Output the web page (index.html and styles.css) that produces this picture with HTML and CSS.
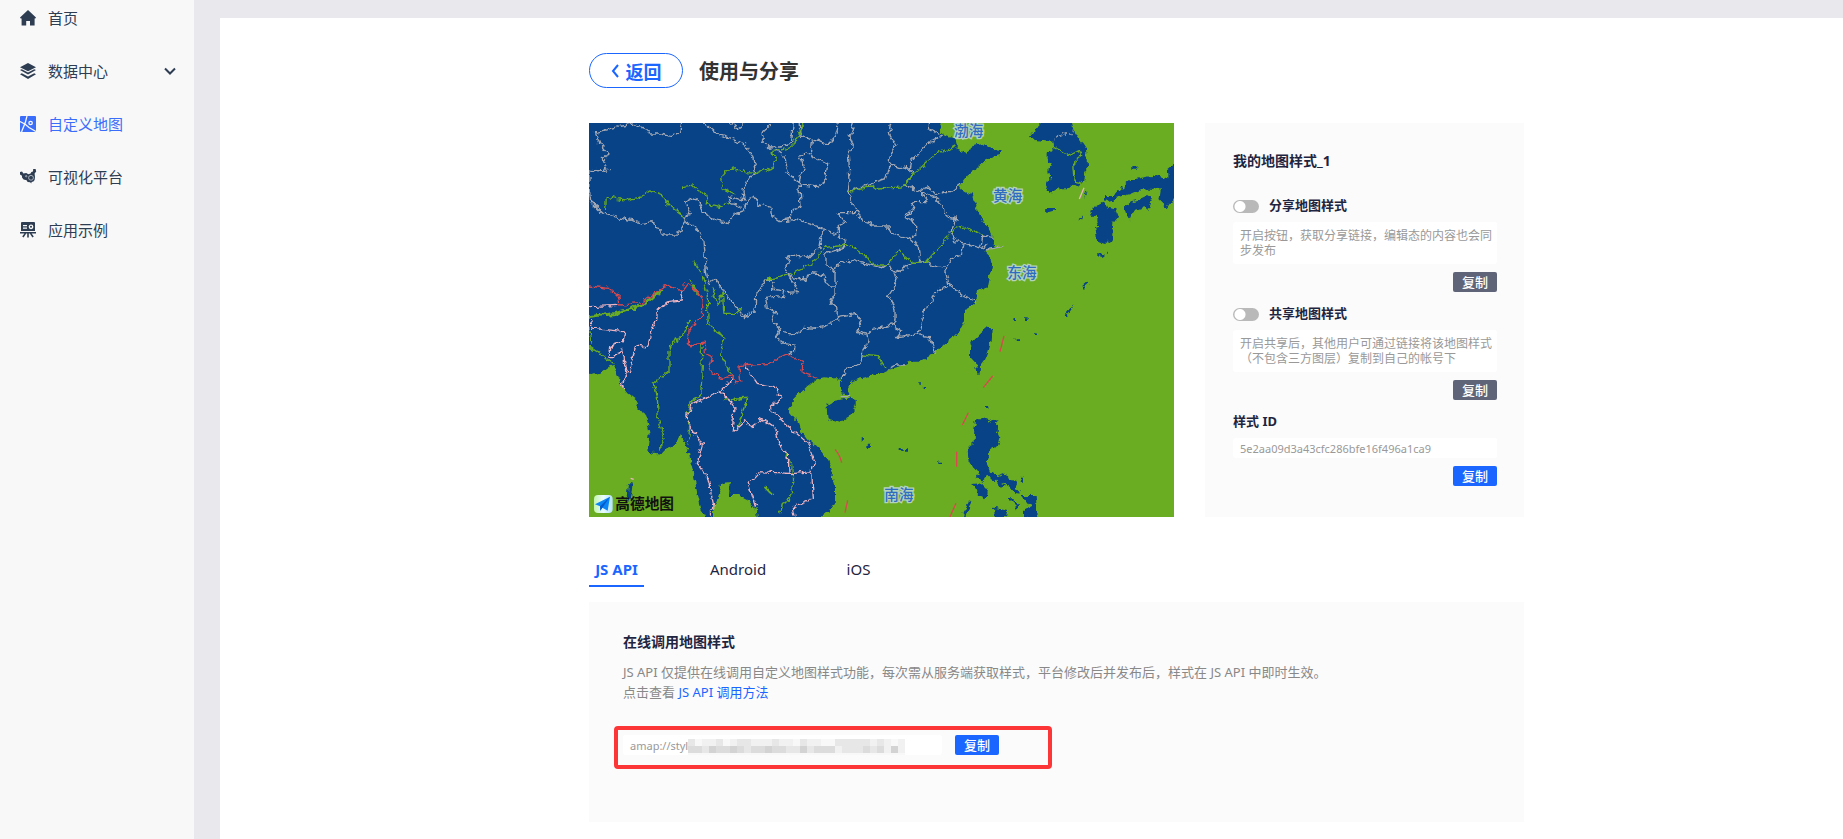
FILE: index.html
```html
<!DOCTYPE html>
<html lang="zh-CN">
<head>
<meta charset="utf-8">
<meta name="viewport" content="width=device-width, initial-scale=1">
<title>使用与分享</title>
<link rel="stylesheet" href="styles.css">
</head>
<body>
<div class="app">
  <nav class="sidebar">
    <a class="nav-item" href="#home">
      <svg class="nav-icon" viewBox="0 0 16 16"><path d="M8 0 16 7.4 15.3 8.4H14.6V15.6H10V11H6.2V15.6H1.6V8.4H.7L0 7.4Z"/></svg>
      <span>首页</span>
    </a>
    <a class="nav-item" href="#data">
      <svg class="nav-icon" viewBox="0 0 16 16"><path d="M8 0 16 4.2 8 8.2 0 4.2ZM0 7 1.8 6.2 8 9.4 14.2 6.2 16 7 8 11.5ZM0 11.2 1.8 10.3 8 13.5 14.2 10.3 16 11.2 8 16Z"/></svg>
      <span>数据中心</span>
      <svg class="nav-caret" viewBox="0 0 12 8"><path d="M1 1.5 6 6.5 11 1.5"/></svg>
    </a>
    <a class="nav-item nav-item-active" href="#custom">
      <svg class="nav-icon" viewBox="0 0 16 16"><rect width="16" height="16" rx="1"/><path class="nav-cut" d="M7 0 5.2 6.8 1.5 16M0 5.5 5.2 8.2 9 11.5 16 15.5"/><circle class="nav-cut" cx="10.6" cy="7" r="1.7"/></svg>
      <span>自定义地图</span>
    </a>
    <a class="nav-item" href="#visual">
      <svg class="nav-icon" viewBox="0 0 16 16"><path d="M0 3 2 2.6 3.4 4.4 6.2 4 8.4 5.2 10.6 4.4 11.4 3 13 2.6 13.2 0 15.6 0 16.2 2.6 14.6 4.4 15 8 14.6 11 13.4 12.6 11.6 13 11.2 14.4 10.2 13.2 7.6 13 6.6 11.2 3.6 10.4 2 8.6 2 6.8 0 5.6Z"/><circle class="nav-gear" cx="11" cy="8.8" r="2.4"/><circle class="nav-gear" cx="6.2" cy="7.2" r=".7"/></svg>
      <span>可视化平台</span>
    </a>
    <a class="nav-item" href="#demo">
      <svg class="nav-icon" viewBox="0 0 16 16"><path d="M2 0H14Q15 0 15 1V9H1V1Q1 0 2 0ZM0 10H16V11.4H11.6L13.8 14.6 12.4 15.4 9.8 11.6H8.8V15.4H7.2V11.6H6.2L3.6 15.4 2.2 14.6 4.4 11.4H0Z"/><path class="nav-cut" d="M3 3.6H7M3 6.2H7"/><circle class="nav-cut" cx="11" cy="4.8" r="1.7"/></svg>
      <span>应用示例</span>
    </a>
  </nav>

  <main class="main">
    <div class="content">
      <header class="page-head">
        <button class="back" type="button">
          <svg class="back-icon" viewBox="0 0 8 14"><path d="M7 1 2 7 7 13"/></svg>
          <span>返回</span>
        </button>
        <h1 class="page-title">使用与分享</h1>
      </header>

      <div class="overview">
        <svg class="map" viewBox="0 9 1755 1182" preserveAspectRatio="xMidYMid slice" role="img" aria-label="地图预览">
          <defs>
            <filter id="rough" filterUnits="userSpaceOnUse" x="-60" y="-60" width="1900" height="1320" color-interpolation-filters="sRGB">
              <feTurbulence type="fractalNoise" baseFrequency="0.05" numOctaves="3" seed="4" result="n"/>
              <feDisplacementMap in="SourceGraphic" in2="n" scale="22" xChannelSelector="R" yChannelSelector="G"/>
            </filter>
            <linearGradient id="logo" x1="0" y1="0" x2="1" y2="0"><stop offset="0" stop-color="#c4f5ae"/><stop offset=".5" stop-color="#e9fbff"/><stop offset="1" stop-color="#b5e2ff"/></linearGradient>
          </defs>
          <rect class="sea" y="9" width="1755" height="1182"/>
          <g filter="url(#rough)">
            <g class="land">
              <path d="M-50-40H1058V9L1052 35 1068 48 1100 58 1103 70 1103 88 1125 98 1142 92 1150 76 1173 70 1203 85 1238 90 1233 105 1198 115 1188 122 1168 140 1148 150 1133 175 1113 200 1128 215 1148 225 1158 250 1168 280 1178 295 1190 315 1203 330 1213 350 1211 372 1215 385 1185 392 1193 400 1213 420 1211 445 1203 470 1198 495 1178 513 1163 517 1163 540 1143 560 1128 570 1128 600 1113 630 1088 655 1068 670 1048 690 1018 710 988 725 958 725 928 740 898 750 878 760 838 770 798 780 783 790 778 800 783 815 778 825 763 825 753 810 753 776 708 772 683 778 658 795 638 815 613 840 600 875 628 910 633 930 658 960 688 985 718 1020 733 1060 738 1100 738 1140 718 1175 698 1190V1240H503V1190L500 1165 480 1140 450 1125 420 1125 422 1092 392 1095 390 1130 375 1160V1240H345V1190L335 1160 325 1120 315 1070 305 1030 300 1000 290 970 275 942 268 965 240 980 220 1002 175 995 182 940 172 890 150 860 140 840 115 820 100 800 85 765 75 735 60 740 40 755 10 765-50 760Z"/>
              <path d="M713 862 738 842 778 835 800 840 800 855 783 890 753 908 716 898Z"/>
              <path d="M1173 640 1193 622 1211 628 1208 660 1198 695 1188 720 1173 740 1172 758 1165 758 1161 730 1143 710 1143 685 1153 660Z"/>
              <path d="M1163 892H1180L1193 898 1213 905 1225 898 1223 935 1231 950 1223 980 1198 995 1193 1030 1203 1055 1225 1068 1240 1060 1254 1066 1260 1080 1285 1082 1280 1096 1295 1124 1280 1122 1262 1100 1240 1088 1248 1102 1235 1100 1220 1080 1200 1070 1178 1085 1160 1075 1176 1055 1148 1040 1138 1020 1136 980H1153L1156 930Z"/>
              <path d="M1150 1092 1180 1090 1195 1105 1190 1138 1175 1130Z"/>
              <path d="M1300 1128 1340 1128 1345 1180 1352 1190 1305 1200 1305 1170 1325 1160Z"/>
              <path d="M1215 1160 1255 1170 1250 1200H1218ZM1260 1130 1290 1160 1285 1165 1260 1140ZM1115 1200 1128 1160 1138 1150 1140 1140 1147 1150 1120 1200Z"/>
              <path d="M1348-40V20L1323 50 1338 60 1388 65 1391 90 1373 95 1373 120 1388 130 1378 150 1381 180 1368 210 1388 220 1413 205 1438 205 1473 190 1485 185 1495 150 1491 90 1458 40 1443-40Z"/>
              <path d="M1543 245 1503 270 1508 290 1523 290 1531 320 1518 325 1528 365 1548 372 1568 360 1573 310 1587 290 1578 265 1553 260Z"/>
              <path d="M1548 228V245L1588 235 1623 225 1663 208 1693 210 1713 205 1708 240 1733 265 1760 225H1800V130L1760 132 1738 150 1738 175 1703 165 1623 180 1583 215 1573 228Z"/>
              <path d="M1605 262 1613 290 1623 298 1633 275 1663 265 1678 270 1688 240 1668 228 1643 240 1623 245Z"/>
              <path d="M1371 272 1378 264 1398 264 1398 274 1380 279ZM1465 305 1483 286 1480 298ZM1485 238 1493 212 1495 220ZM1480 500 1498 485 1503 488 1485 503ZM1430 580 1450 556 1445 570 1432 588ZM1531 402H1540V410H1531ZM1547 400 1555 386 1552 402ZM1630 138H1642V146H1630ZM1295 1070H1305V1088H1295ZM985 790H993V797H985ZM1004 800H1014V807H1004ZM929 988H938V995H929ZM818 955H825V962H818ZM835 977H843V984H835ZM945 988H954V995H945ZM1048 1022H1056V1029H1048ZM1280 655H1290V662H1280ZM1335 640H1343V645H1335ZM1270 592H1278V600H1270ZM1308 592H1316V600H1308ZM1188 860H1198V867H1188ZM120 1090 128 1090 122 1140 115 1145Z"/>
            </g>
            <g class="line">
              <g class="province">
                <path d="M130 12 80 22 20 38 32 68 60 102 40 120 55 150 0 148V200L5 245 45 283 110 298 165 310 190 305 220 345H265L290 305M132 12 175 28 185 42H215L250 50 272 38 278 0M290 305 300 275 290 245 310 235 328 242 345 280 380 298 420 308 435 282 465 272 480 240 500 232 510 252 545 262 552 290 570 302 600 300M340 5 385 42 430 58 470 75 490 105 500 158 478 175 462 210 465 240 420 230 425 250 455 262M290 305 320 320 345 365 352 450 358 490 380 475 402 515 440 560 465 590 498 575 500 530 530 480 550 482 555 505 585 510 580 530 530 535 535 565 560 575 550 600 575 625 560 650 585 670 618 675 616 695 593 705M420 5 445 25 465 12M545 12 515 40 520 60 545 85 600 72M560 90 585 110 600 165"/>
                <path transform="translate(588 0)" d="M25 0 20 70 0 75M45 0 48 45 80 60 130 72 150 50 165 0M80 60 75 100 45 105 60 150 45 160 40 188 0 160M75 105 128 130 122 180 95 200 45 195 48 260 20 270V295L0 298M20 295 100 320 160 345 180 360 182 380 120 400V430L150 460V520L135 545 155 560 158 600 150 600 115 620 90 625 60 622 25 645 0 638M115 322 105 380 70 415 20 405 0 440 15 470 50 480 85 458 115 465 130 495H148M15 470 40 515 0 518M210 5 195 50 205 75 190 100 195 180 188 215 215 275 235 305 265 318H315L320 340 375 355 400 380 405 430M215 278H158L180 305 160 315V345M188 215 255 190 305 175 315 135 310 120 330 75 310 40 320 0M315 135 375 148 380 120 430 70 470 45 430 25V0M375 148 385 160 360 195 405 215 450 235 480 265 490 295 520 300 510 290 495 335 510 365 540 370 590 385 600 370M405 215 430 200 450 225 480 215H500L525 195M405 215 425 245 390 245 385 265 362 290 395 310V340L375 355M405 430H380L325 460 335 490 312 525 330 570V600L325 615M150 460 155 435 205 418 240 430 290 443 310 430 325 460M405 430 430 425 435 435 480 445 495 420 530 400 537 372M480 445 492 495 450 515 440 550 420 560 415 590 400 640M492 495 530 525 575 545M158 590 215 580 230 605 215 635 245 642 250 665 230 695 225 725 180 755 168 778M250 642 265 628 320 615 350 630 335 650 395 642 430 650 445 690 452 702M310 748 330 735 355 735M170 830H195M590 345 625 355M585 385 595 345M600 390 655 380"/>
                <path class="dash" d="M1393 60 1408 42H1445L1455 30"/>
              </g>
              <g class="river">
                <path d="M50 270 52 230 110 240 160 230 185 210 220 225 240 255 275 280 290 300M280 200 310 195 325 210 350 225 355 250 395 260 425 250M608 82 550 95 565 120 545 145 505 160 470 158 455 145 415 150 395 175 400 205 440 225M315 425 340 470 355 530 357 600 375 630 408 650 392 700 430 770M370 500 388 555 400 520 405 580 440 580 460 565M305 475 325 520M535 480 570 472 608 462 668 430 708 382 778 375 823 405 858 435 893 435 908 420 930 392 973 430 1008 430 1078 350 1098 325 1133 320 1178 345M648 5 608 80M776 215 843 198 868 207 946 200 968 165 993 145 1038 105 1108 70M305 600 280 650 250 665 240 690V755L195 790 205 830 208 900 225 950 212 990M335 670 340 740 335 830 305 845 292 890 302 920 298 970M410 840 470 835 460 880 445 920M0 620 10 675M0 680 40 705 70 730M818 705 868 710 888 745M588 1000 608 1030 613 1120 588 1150M1393 80 1438 105 1471 88 1478 110 1451 130 1455 180 1478 185M600 1140 580 1150 575 1180"/>
                <path class="wide" d="M0 590 80 580 160 555 190 530 215 512M530 1103 553 1126"/>
              </g>
              <path class="border-red" d="M0 498 60 505 90 530 92 552 155 548 215 505 240 495 275 515 295 488 325 515 342 540 340 590 325 600 300 630 298 675 345 670 350 705 370 715 360 750 400 778 430 770 440 788 455 785 450 740 540 730 590 705 643 725 638 755 688 772"/>
              <path class="border-pink" d="M0 560 90 556M275 515 280 540 240 545 205 570 203 600 190 630 175 680 140 675 125 755 115 755 98 685 80 710 60 710 62 680 100 665 105 635 10 625 5 600M105 710 112 775 98 790 105 810M430 775 395 815 345 835 310 850 292 895 340 975 325 1030 355 1070 375 1160 355 1200M395 815 435 855 430 935 465 905 490 920 520 898 560 925 570 975 598 1005 600 1060 510 1055 478 1090 500 1160M470 740 505 790 555 800 575 835 540 865 588 910 663 975 676 1025 668 1055 673 1135 613 1160 618 1190M668 1055 618 1060H588"/>
            </g>
          </g>
          <g class="line">
            <path class="border-red" d="M738 988Q753 1005 758 1028M776 1141 768 1178M1138 878 1120 915M1103 995V1040M1101 1150 1083 1190M1245 648 1233 695M1211 768 1183 803"/>
            <path class="border-pink" d="M1485 203 1471 237M125 1075 134 1078"/>
          </g>
          <g class="sea-name">
            <text x="1095" y="48">渤海</text>
            <text x="1212" y="243">黄海</text>
            <text x="1255" y="473">东海</text>
            <text x="886" y="1141">南海</text>
          </g>
          <rect x="15" y="1125" width="56" height="54" rx="12" fill="url(#logo)"/>
          <path d="M18 1153 63 1130 56 1172 40 1163 34 1172 33 1159Z" fill="#0a86f7"/>
          <path d="M33 1159 63 1130 40 1163 34 1172Z" fill="#075bc9"/>
          <text class="brand" x="79" y="1168">高德地图</text>
        </svg>

        <section class="card side">
          <h2 class="side-title">我的地图样式_1</h2>
          <div class="option">
            <label class="option-label"><input class="switch" type="checkbox"><span>分享地图样式</span></label>
            <p class="note">开启按钮，获取分享链接，编辑态的内容也会同步发布</p>
            <button class="copy copy-muted" type="button">复制</button>
          </div>
          <div class="option">
            <label class="option-label"><input class="switch" type="checkbox"><span>共享地图样式</span></label>
            <p class="note">开启共享后，其他用户可通过链接将该地图样式（不包含三方图层）复制到自己的帐号下</p>
            <button class="copy copy-muted" type="button">复制</button>
          </div>
          <div class="option">
            <label class="option-label" for="style-id">样式 ID</label>
            <input class="field" id="style-id" type="text" readonly value="5e2aa09d3a43cfc286bfe16f496a1ca9">
            <button class="copy" type="button">复制</button>
          </div>
        </section>
      </div>

      <div class="tabs" role="tablist">
        <button class="tab tab-active" type="button" role="tab" aria-selected="true">JS API</button>
        <button class="tab" type="button" role="tab" aria-selected="false">Android</button>
        <button class="tab" type="button" role="tab" aria-selected="false">iOS</button>
      </div>

      <section class="card usage">
        <div class="usage-text">
          <h2 class="usage-title">在线调用地图样式</h2>
          <p>JS API 仅提供在线调用自定义地图样式功能，每次需从服务端获取样式，平台修改后并发布后，样式在 JS API 中即时生效。</p>
          <p>点击查看 <a class="link" href="#js-api">JS API 调用方法</a></p>
        </div>
        <div class="style-url">
          <div class="url-field">
            <input class="field" type="text" readonly aria-label="样式地址" value="amap://styl">
            <svg class="mosaic" viewBox="0 0 217 16" aria-hidden="true">
              <rect width="217" height="16" fill="#f1f1f1"/>
              <path fill="#e7e7e7" d="M0 0h7v7h-7zM28 0h7v7h-7zM49 0h14v7h-14zM84 0h7v7h-7zM112 0h7v7h-7zM147 0h35v7h-35zM189 0h7v7h-7zM14 7h7v7h-7zM56 7h7v7h-7zM98 7h14v7h-14zM119 7h7v7h-7zM154 7h21v7h-21zM182 7h7v7h-7z"/>
              <path fill="#dcdcdc" d="M0 7h14v7h-14zM28 7h14v7h-14zM49 7h7v7h-7zM63 7h14v7h-14zM84 7h14v7h-14zM126 7h21v7h-21zM175 7h7v7h-7zM189 7h7v7h-7z"/>
              <path fill="#d3d3d3" d="M21 7h7v7h-7zM42 7h7v7h-7zM77 7h7v7h-7zM112 7h7v7h-7zM203 7h7v7h-7z"/>
              <path fill="#f8f8f8" d="M7 0h7v7h-7zM35 0h7v7h-7zM105 0h7v7h-7zM133 0h14v7h-14zM203 0h7v7h-7zM0 14h217v2h-217z"/>
            </svg>
          </div>
          <button class="copy" type="button">复制</button>
        </div>
      </section>
    </div>
  </main>
</div>
</body>
</html>
```
FILE: styles.css
```css
* {
  box-sizing: border-box;
}

body {
  margin: 0;
  background: #e8e8ed;
  color: #1f2540;
  font-family: "Noto Sans", "Noto Sans CJK SC", sans-serif;
  font-size: 13px;
  line-height: 20px;
}

h1, h2, p {
  margin: 0;
}

button, input {
  font-family: inherit;
}

.app {
  display: flex;
  min-height: 100vh;
}

.sidebar {
  display: flex;
  flex: 0 0 194px;
  flex-direction: column;
  gap: 33px;
  padding: 8px 18px 8px 19px;
  background: #f8f8f8;
}

.nav-item {
  display: flex;
  align-items: center;
  gap: 11px;
  height: 20px;
  color: #2e3d52;
  font-size: 15px;
  text-decoration: none;
}

.nav-item-active {
  color: #3b6dfb;
}

.nav-icon {
  width: 18px;
  height: 16px;
  fill: currentColor;
}

.nav-cut {
  fill: none;
  stroke: #f8f8f8;
  stroke-width: 1.3;
}

.nav-gear {
  fill: none;
  stroke: #a9b1bb;
  stroke-width: 1;
}

.nav-caret {
  width: 12px;
  height: 8px;
  margin-left: auto;
  fill: none;
  stroke: currentColor;
  stroke-width: 2;
}

.main {
  flex: 1;
  min-width: 0;
  margin: 18px 0 0 26px;
  padding: 35px 0 17px 50px;
  background: #fff;
}

.content {
  max-width: 935px;
  margin: 0 auto;
}

.page-head {
  display: flex;
  align-items: center;
  gap: 16px;
  height: 35px;
}

.back {
  display: flex;
  align-items: center;
  justify-content: center;
  gap: 7px;
  width: 94px;
  height: 35px;
  padding: 0;
  border: 1px solid #1a66ff;
  border-radius: 18px;
  background: #fff;
  color: #1a66ff;
  font-size: 18px;
  font-weight: 700;
}

.back-icon {
  width: 8px;
  height: 14px;
  fill: none;
  stroke: currentColor;
  stroke-width: 2;
}

.page-title {
  padding-top: 2px;
  color: #333;
  font-size: 20px;
  font-weight: 700;
  line-height: 32px;
}

.overview {
  display: flex;
  gap: 31px;
  margin-top: 35px;
}

.map {
  flex: 1;
  min-width: 0;
  height: 394px;
}

.sea {
  fill: #6aac22;
}

.land {
  fill: #074386;
}

.line {
  fill: none;
  stroke-width: 4;
}

.province {
  stroke: #a3a8b4;
}

.dash {
  stroke-dasharray: 8 6;
}

.river {
  stroke: #6aac22;
}

.wide {
  stroke-width: 8;
}

.border-red {
  stroke: #d9494f;
}

.border-pink {
  stroke: #eeb4c2;
}

.sea-name {
  fill: #2f6cc0;
  stroke: #b4d3bd;
  stroke-width: 8;
  paint-order: stroke;
  font-size: 44px;
  font-weight: 500;
  font-family: "Noto Sans CJK SC", sans-serif;
}

.brand {
  fill: #111;
  font-size: 44px;
  font-weight: 700;
  font-family: "Noto Sans CJK SC", sans-serif;
}

.card {
  background: #fbfbfb;
}

.side {
  display: flex;
  flex: 0 0 319px;
  flex-direction: column;
  gap: 11px;
  padding: 28px 27px 24px 28px;
}

.side-title {
  margin-bottom: 13px;
  font-size: 14px;
  line-height: 20px;
}

.option {
  display: flex;
  flex-direction: column;
}

.option-label {
  display: flex;
  align-items: center;
  gap: 10px;
  height: 20px;
  margin-bottom: 7px;
  font-weight: 700;
}

.switch {
  width: 26px;
  height: 13px;
  margin: 2px 0 0;
  border-radius: 7px;
  appearance: none;
  background: radial-gradient(circle at 7px 50%, #fff 5px, #b9b9b9 6px);
}

.note {
  padding: 6px 4px 6px 7px;
  border-radius: 3px;
  background: #fff;
  color: #999;
  font-size: 12px;
  line-height: 15px;
}

.field {
  width: 100%;
  height: 20px;
  padding: 0 7px;
  border: 0;
  border-radius: 3px;
  outline: 0;
  background: #fff;
  color: #999;
  font-size: 11px;
}

.copy {
  width: 44px;
  height: 20px;
  padding: 0;
  border: 0;
  border-radius: 2px;
  background: #1a66ff;
  color: #fff;
  font-size: 13px;
  font-weight: 500;
  line-height: 20px;
}

.option .copy {
  align-self: flex-end;
  margin-top: 8px;
}

.copy-muted {
  background: #5f6478;
}

.tabs {
  display: flex;
  gap: 66px;
  margin-top: 34px;
}

.tab {
  width: 55px;
  height: 36px;
  padding: 2px 0 0;
  border: 0;
  border-bottom: 2px solid transparent;
  background: none;
  color: #1f2540;
  font-size: 15px;
  white-space: nowrap;
}

.tab-active {
  border-color: #1a66ff;
  color: #1a66ff;
  font-weight: 700;
}

.usage {
  min-height: 220px;
  margin-top: 15px;
  padding: 30px 25px;
}

.usage-text {
  padding-left: 9px;
  color: #888;
}

.usage-title {
  margin-bottom: 10px;
  color: #1f2540;
  font-size: 14px;
  line-height: 20px;
}

.link {
  color: #1a66ff;
  text-decoration: none;
}

.style-url {
  display: flex;
  gap: 13px;
  max-width: 438px;
  margin-top: 24px;
  padding: 5px 49px 10px 5px;
  border: 4px solid #fc3636;
  border-radius: 4px;
}

.url-field {
  display: flex;
  flex: 1;
  position: relative;
}

.mosaic {
  position: absolute;
  top: 4px;
  left: 65px;
  width: 217px;
  height: 16px;
}
```
